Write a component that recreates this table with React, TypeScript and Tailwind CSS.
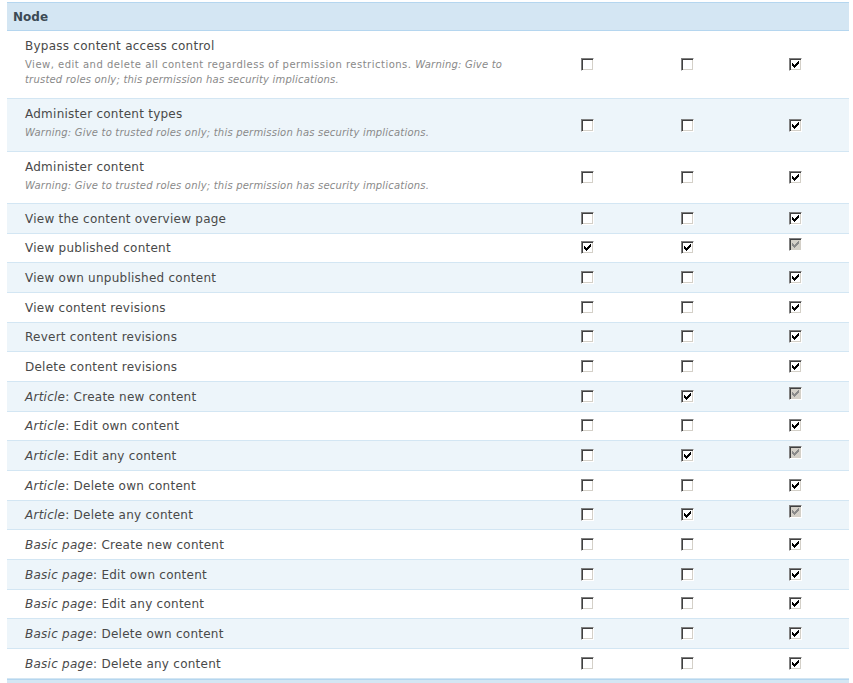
import React from 'react'

type Box = 0 | 1 | 2 // 0 = empty, 1 = checked, 2 = checked + disabled

type Perm = {
  type?: string
  title: string
  desc?: React.ReactNode
  boxes: [Box, Box, Box]
}

const warn = (
  <em className="tracking-[0.2px]">Warning: Give to trusted roles only; this permission has security implications.</em>
)

const perms: Perm[] = [
  {
    title: 'Bypass content access control',
    desc: (
      <>
        <span>View, edit and delete all content regardless of permission restrictions. </span>
        {warn}
      </>
    ),
    boxes: [0, 0, 1],
  },
  { title: 'Administer content types', desc: warn, boxes: [0, 0, 1] },
  { title: 'Administer content', desc: warn, boxes: [0, 0, 1] },
  { title: 'View the content overview page', boxes: [0, 0, 1] },
  { title: 'View published content', boxes: [1, 1, 2] },
  { title: 'View own unpublished content', boxes: [0, 0, 1] },
  { title: 'View content revisions', boxes: [0, 0, 1] },
  { title: 'Revert content revisions', boxes: [0, 0, 1] },
  { title: 'Delete content revisions', boxes: [0, 0, 1] },
  { type: 'Article', title: 'Create new content', boxes: [0, 1, 2] },
  { type: 'Article', title: 'Edit own content', boxes: [0, 0, 1] },
  { type: 'Article', title: 'Edit any content', boxes: [0, 1, 2] },
  { type: 'Article', title: 'Delete own content', boxes: [0, 0, 1] },
  { type: 'Article', title: 'Delete any content', boxes: [0, 1, 2] },
  { type: 'Basic page', title: 'Create new content', boxes: [0, 0, 1] },
  { type: 'Basic page', title: 'Edit own content', boxes: [0, 0, 1] },
  { type: 'Basic page', title: 'Edit any content', boxes: [0, 0, 1] },
  { type: 'Basic page', title: 'Delete own content', boxes: [0, 0, 1] },
  { type: 'Basic page', title: 'Delete any content', boxes: [0, 0, 1] },
]

// row heights (border included) for the rows that carry a description
const tallRows = ['h-[68px]', 'h-[53px]', 'h-[52px]']

function Checkbox({ state }: { state: Box }) {
  const disabled = state === 2
  return (
    <span
      className={
        'flex h-[13px] w-[13px] items-center justify-center border border-t-[#808080] border-l-[#808080] border-b-white border-r-white shadow-[inset_1px_1px_0_#404040,inset_-1px_-1px_0_#d4d0c8] ' +
        (disabled ? 'bg-[#d4d0c8] -translate-y-[3px]' : 'bg-white')
      }
    >
      {state > 0 && (
        <svg width="7" height="7" viewBox="0 0 7 7" className="block">
          <path
            d="M0 2v3h1v1h1v1h1v-1h1v-1h1v-1h1v-1h1v-3h-1v1h-1v1h-1v1h-1v1h-1v-1h-1v-1z"
            fill={disabled ? '#8a8a8a' : '#000'}
          />
        </svg>
      )}
    </span>
  )
}

export default function App() {
  return (
    <div className="min-h-[683px] bg-white font-['DejaVu_Sans',Verdana,sans-serif] text-[12px] tracking-[0.25px] text-[#494949]">
      <div className="ml-[7px] w-[842px] pt-[2px]">
        <div className="flex h-[29px] items-center border-y border-[#b5d6ef] bg-[#d4e6f3] pl-[6px] font-bold tracking-normal text-[#3c4a55]">
          Node
        </div>
        {perms.map((p, i) => {
          const tall = i < 3
          return (
            <div
              key={i}
              className={
                'grid grid-cols-[574px_100px_108px_1fr] border-b border-[#d3e6f3] ' +
                (i % 2 === 1 ? 'bg-[#edf5fa] ' : 'bg-white ') +
                (tall ? tallRows[i] : 'h-[29.67px]')
              }
            >
              <div className={'pl-[18px] ' + (tall ? 'pt-[6px]' : 'flex items-center pt-[1px]')}>
                <div className="leading-[18px]">
                  {p.type && <em>{p.type}</em>}
                  {p.type && ': '}
                  {p.title}
                </div>
                {p.desc && (
                  <div className="mt-[2px] max-w-[495px] text-[10px] leading-[15px] tracking-[0.5px] text-[#898989]">
                    {p.desc}
                  </div>
                )}
              </div>
              {p.boxes.map((b, j) => (
                <div key={j} className="flex items-center">
                  <Checkbox state={b} />
                </div>
              ))}
            </div>
          )
        })}
        <div className="h-[29px] border-t border-[#b5d6ef] bg-[#d4e6f3]" />
      </div>
    </div>
  )
}
